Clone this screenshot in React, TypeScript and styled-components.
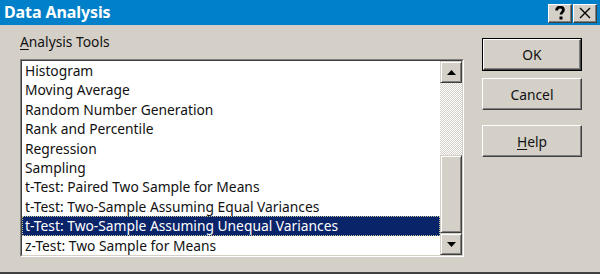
import React from "react";
import styled, { createGlobalStyle } from "styled-components";

const Global = createGlobalStyle`
  html, body { margin: 0; padding: 0; background: #d4d0c8; }
  body { font-family: "Noto Sans", "Open Sans", sans-serif; }
`;

const Window = styled.div`
  width: 600px;
  height: 274px;
  box-sizing: border-box;
  background: #d4d0c8;
  border-bottom: 2px solid #404040;
  display: flex;
  flex-direction: column;
  overflow: hidden;
`;

const TitleBar = styled.div`
  height: 25px;
  background: #0080c8;
  display: flex;
  align-items: center;
  padding: 0 3px 0 4px;
  flex-shrink: 0;
`;

const Title = styled.div`
  flex: 1;
  color: #fff;
  font-weight: bold;
  font-size: 16px;
  letter-spacing: -0.1px;
  line-height: 25px;
`;

const CaptionButton = styled.div`
  width: 24px;
  height: 19px;
  box-sizing: border-box;
  background: #d4d0c8;
  border-top: 1px solid #ffffff;
  border-left: 1px solid #ffffff;
  border-right: 1px solid #404040;
  border-bottom: 1px solid #404040;
  box-shadow: inset -1px -1px 0 #808080;
  display: flex;
  align-items: center;
  justify-content: center;
  margin-left: 1px;
  margin-top: 1px;
`;

const Body = styled.div`
  flex: 1;
  display: flex;
  padding: 8px 18px 0 20px;
`;

const LeftCol = styled.div`
  width: 444px;
  display: flex;
  flex-direction: column;
`;

const Label = styled.div`
  font-size: 13.8px;
  color: #111;
  height: 26px;
  line-height: 18px;
  u { text-decoration: underline; text-underline-offset: 2px; }
`;

const ListBox = styled.div`
  height: 198px;
  box-sizing: border-box;
  border-top: 1px solid #808080;
  border-left: 1px solid #808080;
  border-right: 1px solid #ffffff;
  border-bottom: 1px solid #ffffff;
  display: flex;
`;

const ListInner = styled.div`
  flex: 1;
  display: flex;
  border-top: 1px solid #404040;
  border-left: 1px solid #404040;
  border-right: 1px solid #d4d0c8;
  border-bottom: 1px solid #d4d0c8;
  background: #fff;
  overflow: hidden;
`;

const Items = styled.div`
  flex: 1;
  display: flex;
  flex-direction: column;
`;

const Item = styled.div<{ $selected?: boolean }>`
  height: 19.4px;
  flex-shrink: 0;
  box-sizing: border-box;
  padding-left: 2px;
  font-size: 13.8px;
  line-height: 18px;
  white-space: nowrap;
  color: ${(p) => (p.$selected ? "#ffffff" : "#111111")};
  background: ${(p) => (p.$selected ? "#0a246a" : "transparent")};
  border: 1px ${(p) => (p.$selected ? "dotted #c8c8a0" : "solid transparent")};
`;

const ScrollBar = styled.div`
  width: 22px;
  display: flex;
  flex-direction: column;
`;

const ScrollButton = styled.div<{ $grow?: boolean }>`
  flex: ${(p) => (p.$grow ? "1" : "0 0 22px")};
  box-sizing: border-box;
  background: #d4d0c8;
  border-top: 1px solid #d4d0c8;
  border-left: 1px solid #d4d0c8;
  border-right: 1px solid #404040;
  border-bottom: 1px solid #404040;
  box-shadow: inset 1px 1px 0 #ffffff, inset -1px -1px 0 #808080;
  display: flex;
  align-items: center;
  justify-content: center;
`;

const Track = styled.div`
  flex: 0 0 72px;
  background-color: #d4d0c8;
  background-image: conic-gradient(#ffffff 25%, #d4d0c8 0 50%, #ffffff 0 75%, #d4d0c8 0);
  background-size: 2px 2px;
`;

const RightCol = styled.div`
  margin-left: 18px;
  padding-top: 5px;
  display: flex;
  flex-direction: column;
`;

const Button = styled.div<{ $default?: boolean; $gap?: number }>`
  width: 100px;
  height: ${(p) => (p.$default ? "33px" : "32px")};
  margin-top: ${(p) => p.$gap ?? 0}px;
  box-sizing: border-box;
  background: #d4d0c8;
  border: ${(p) => (p.$default ? "1px solid #000000" : "none")};
  display: flex;
`;

const ButtonFace = styled.div`
  flex: 1;
  border-top: 1px solid #ffffff;
  border-left: 1px solid #ffffff;
  border-right: 1px solid #404040;
  border-bottom: 1px solid #404040;
  box-shadow: inset -1px -1px 0 #808080;
  display: flex;
  align-items: center;
  justify-content: center;
  font-size: 13.8px;
  color: #111;
  u { text-decoration: underline; text-underline-offset: 2px; }
`;

const Arrow = ({ up }: { up?: boolean }) => (
  <svg width="9" height="5" viewBox="0 0 9 5">
    {up ? <polygon points="4.5,0 9,5 0,5" fill="#000" /> : <polygon points="0,0 9,0 4.5,5" fill="#000" />}
  </svg>
);

const items = [
  "Histogram",
  "Moving Average",
  "Random Number Generation",
  "Rank and Percentile",
  "Regression",
  "Sampling",
  "t-Test: Paired Two Sample for Means",
  "t-Test: Two-Sample Assuming Equal Variances",
  "t-Test: Two-Sample Assuming Unequal Variances",
  "z-Test: Two Sample for Means",
];

export default function App() {
  return (
    <>
      <Global />
      <Window>
        <TitleBar>
          <Title>Data Analysis</Title>
          <CaptionButton>
            <svg width="10" height="14" viewBox="0 0 10 14">
              <path d="M1.6 4.6 C1.6 1.6 3.5 1.2 5 1.2 C7 1.2 8.4 2.3 8.4 4 C8.4 6 6 6.3 6 8.6" fill="none" stroke="#000" strokeWidth="2.8" />
              <rect x="4.5" y="10.5" width="3" height="3" fill="#000" />
            </svg>
          </CaptionButton>
          <CaptionButton>
            <svg width="12" height="12" viewBox="0 0 12 12">
              <path d="M1 1 L11 11 M11 1 L1 11" stroke="#000" strokeWidth="1.4" />
            </svg>
          </CaptionButton>
        </TitleBar>
        <Body>
          <LeftCol>
            <Label>
              <u>A</u>nalysis Tools
            </Label>
            <ListBox>
              <ListInner>
                <Items>
                  {items.map((t, i) => (
                    <Item key={t} $selected={i === 8}>
                      {t}
                    </Item>
                  ))}
                </Items>
                <ScrollBar>
                  <ScrollButton>
                    <Arrow up />
                  </ScrollButton>
                  <Track />
                  <ScrollButton $grow />
                  <ScrollButton>
                    <Arrow />
                  </ScrollButton>
                </ScrollBar>
              </ListInner>
            </ListBox>
          </LeftCol>
          <RightCol>
            <Button $default>
              <ButtonFace>OK</ButtonFace>
            </Button>
            <Button $gap={7}>
              <ButtonFace>Cancel</ButtonFace>
            </Button>
            <Button $gap={15}>
              <ButtonFace>
                <u>H</u>elp
              </ButtonFace>
            </Button>
          </RightCol>
        </Body>
      </Window>
    </>
  );
}
